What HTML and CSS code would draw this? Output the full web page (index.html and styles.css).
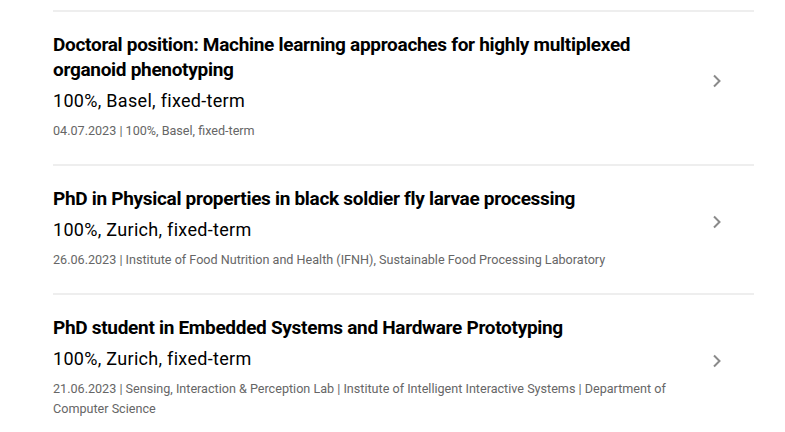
FILE: index.html
```html
<!DOCTYPE html>
<html lang="en">
<head>
  <meta charset="UTF-8">
  <meta name="viewport" content="width=device-width, initial-scale=1.0">
  <title>Jobs</title>
  <link rel="stylesheet" href="styles.css">
</head>
<body>
<ul class="job-list">
  <li class="job">
    <a class="job-link" href="#">
      <div class="job-text">
        <h3 class="job-title">Doctoral position: Machine learning approaches for highly multiplexed organoid phenotyping</h3>
        <p class="job-terms">100%, Basel, fixed-term</p>
        <p class="job-meta">04.07.2023 | 100%, Basel, fixed-term</p>
      </div>
      <svg class="chevron" width="10" height="14" viewBox="0 0 10 14"><path d="M2 1.5 L7.5 7 L2 12.5" fill="none" stroke="#8a8a8a" stroke-width="2"/></svg>
    </a>
  </li>
  <li class="job">
    <a class="job-link" href="#">
      <div class="job-text">
        <h3 class="job-title">PhD in Physical properties in black soldier fly larvae processing</h3>
        <p class="job-terms">100%, Zurich, fixed-term</p>
        <p class="job-meta">26.06.2023 | Institute of Food Nutrition and Health (IFNH), Sustainable Food Processing Laboratory</p>
      </div>
      <svg class="chevron" width="10" height="14" viewBox="0 0 10 14"><path d="M2 1.5 L7.5 7 L2 12.5" fill="none" stroke="#8a8a8a" stroke-width="2"/></svg>
    </a>
  </li>
  <li class="job">
    <a class="job-link" href="#">
      <div class="job-text">
        <h3 class="job-title">PhD student in Embedded Systems and Hardware Prototyping</h3>
        <p class="job-terms">100%, Zurich, fixed-term</p>
        <p class="job-meta">21.06.2023 | Sensing, Interaction &amp; Perception Lab | Institute of Intelligent Interactive Systems | Department of Computer Science</p>
      </div>
      <svg class="chevron" width="10" height="14" viewBox="0 0 10 14"><path d="M2 1.5 L7.5 7 L2 12.5" fill="none" stroke="#8a8a8a" stroke-width="2"/></svg>
    </a>
  </li>
</ul>
</body>
</html>
```

FILE: styles.css
```css
body { margin: 0; padding: 10px 31px 0 53px; font-family: Roboto, "Liberation Sans", sans-serif; color: #000; background: #fff; }
.job-list { list-style: none; margin: 0; padding: 0; }
.job { border-top: 2px solid #eeeeee; }
.job-link { display: flex; align-items: center; padding: 20px 0 23px; color: inherit; text-decoration: none; }
.job-text { flex: 1; padding-right: 35px; }
.job-title { margin: 0 0 6px; font-size: 19px; line-height: 25px; font-weight: 700; letter-spacing: -0.3px; }
.job-terms { margin: 0 0 8px; font-size: 18px; line-height: 25px; letter-spacing: 0.3px; }
.job-meta { margin: 0; font-size: 12.6px; line-height: 20px; color: #666; }
.chevron { margin: 0 32px 12px 0; }
```
